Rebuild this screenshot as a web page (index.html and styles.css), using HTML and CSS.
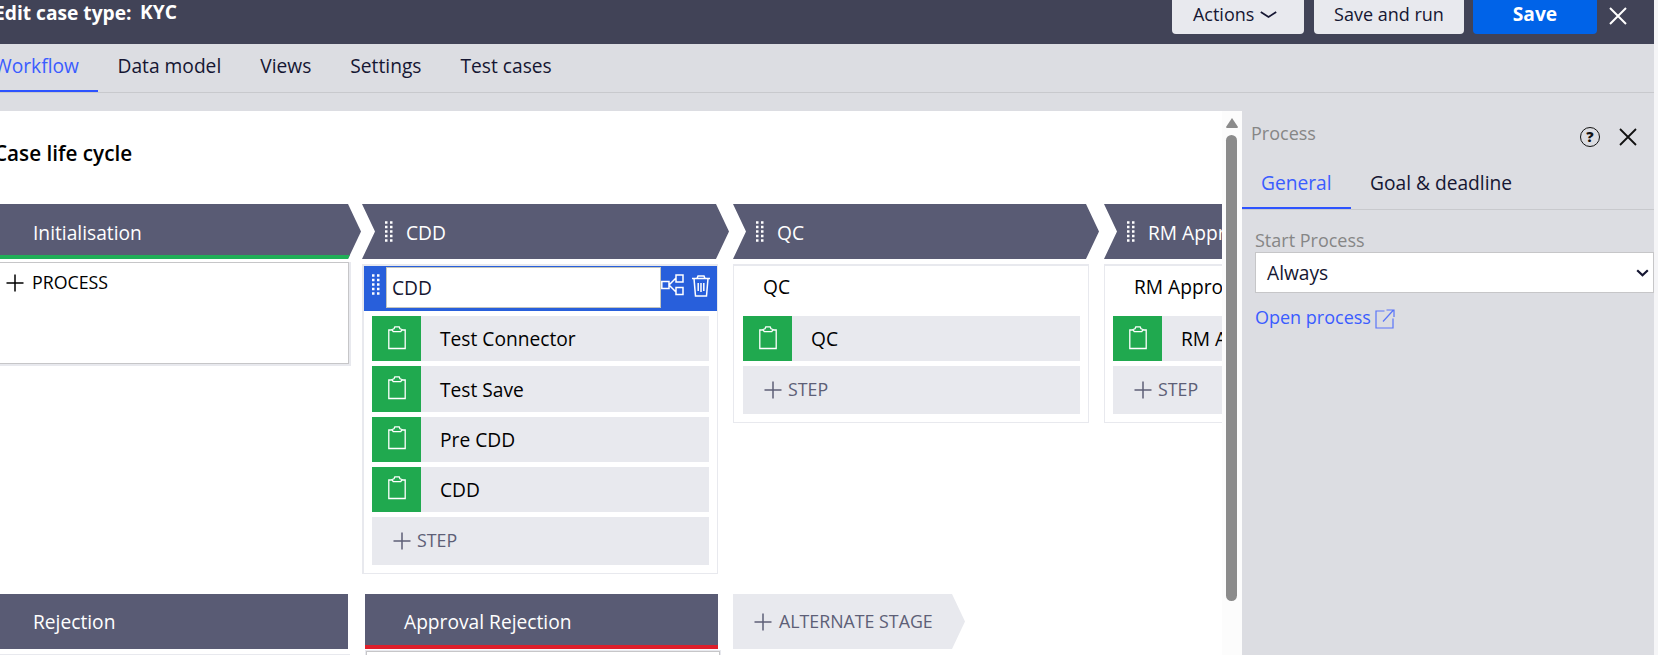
FILE: index.html
```html
<!DOCTYPE html>
<html lang="en">
<head>
    <meta charset="UTF-8">
    <title>Edit case type: KYC</title>
    <link rel="stylesheet" href="styles.css">
</head>
<body>
    <!-- Shared icons -->
    <svg class="icon-defs" width="0" height="0">
        <symbol id="icon-close" viewBox="0 0 18 18"><path d="M1 1 L17 17 M17 1 L1 17"/></symbol>
        <symbol id="icon-plus" viewBox="0 0 18 18"><path d="M9 0.5 V17.5 M0.5 9 H17.5"/></symbol>
        <symbol id="icon-clipboard" viewBox="0 0 18 24"><path d="M4 4 H0.8 V22.5 H17.2 V4 H14 M4 3.5 L6 2.8 L6.8 0.9 H11.2 L12 2.8 L14 3.5 L12.8 5.6 H5.2 Z"/></symbol>
        <symbol id="icon-grip" viewBox="0 0 8 22"><path d="M0 1.5H2.5 M0 6H2.5 M0 10.5H2.5 M0 15H2.5 M0 19.5H2.5 M5 1.5H7.5 M5 6H7.5 M5 10.5H7.5 M5 15H7.5 M5 19.5H7.5"/></symbol>
    </svg>

    <div class="app">
        <header class="topbar">
            <h1>Edit case type:</h1>
            <span class="case-name">KYC</span>
            <div class="topbar-actions">
                <button class="btn btn-actions">Actions
                    <svg class="icon" width="17" height="8" viewBox="0 0 17 8"><path d="M0.8 1 L8.5 6 L16.2 1"/></svg>
                </button>
                <button class="btn btn-run">Save and run</button>
                <button class="btn btn-save">Save</button>
                <svg class="icon close" width="18" height="18"><use href="#icon-close"/></svg>
            </div>
        </header>

        <nav class="tabs">
            <a class="tab active">Workflow</a>
            <a class="tab">Data model</a>
            <a class="tab">Views</a>
            <a class="tab">Settings</a>
            <a class="tab">Test cases</a>
        </nav>

        <div class="workspace">
            <main class="canvas">
                <h2>Case life cycle</h2>

                <div class="stages">
                    <section class="stage stage-first">
                        <div class="stage-head"><span>Initialisation</span></div>
                        <div class="add-process">
                            <svg class="icon" width="18" height="18"><use href="#icon-plus"/></svg>PROCESS
                        </div>
                    </section>

                    <section class="stage stage-selected">
                        <div class="stage-head">
                            <svg class="grip" width="8" height="22"><use href="#icon-grip"/></svg><span>CDD</span>
                        </div>
                        <div class="process">
                            <div class="process-edit">
                                <svg class="grip" width="8" height="22"><use href="#icon-grip"/></svg>
                                <input type="text" value="CDD">
                                <svg class="icon flow" width="23" height="22" viewBox="0 0 23 22"><path d="M0.8 7.5H8V14.5H0.8Z M15 1H22V8H15Z M15 13.5H22V20.5H15Z M15 4 L8 11 L15 18"/></svg>
                                <svg class="icon trash" width="18" height="22" viewBox="0 0 18 22"><path d="M0 3.5H18 M5 3.5 L6 1H12L13 3.5 M2 3.5 L3.5 21H14.5L16 3.5 M6.2 8V16 M9 8V17 M11.8 8V16"/></svg>
                            </div>
                            <div class="step"><i><svg class="icon" width="18" height="24"><use href="#icon-clipboard"/></svg></i><span>Test Connector</span></div>
                            <div class="step"><i><svg class="icon" width="18" height="24"><use href="#icon-clipboard"/></svg></i><span>Test Save</span></div>
                            <div class="step"><i><svg class="icon" width="18" height="24"><use href="#icon-clipboard"/></svg></i><span>Pre CDD</span></div>
                            <div class="step"><i><svg class="icon" width="18" height="24"><use href="#icon-clipboard"/></svg></i><span>CDD</span></div>
                            <div class="add-step"><svg class="icon" width="18" height="18"><use href="#icon-plus"/></svg>STEP</div>
                        </div>
                    </section>

                    <section class="stage">
                        <div class="stage-head">
                            <svg class="grip" width="8" height="22"><use href="#icon-grip"/></svg><span>QC</span>
                        </div>
                        <div class="process">
                            <div class="process-name">QC</div>
                            <div class="step"><i><svg class="icon" width="18" height="24"><use href="#icon-clipboard"/></svg></i><span>QC</span></div>
                            <div class="add-step"><svg class="icon" width="18" height="18"><use href="#icon-plus"/></svg>STEP</div>
                        </div>
                    </section>

                    <section class="stage stage-last">
                        <div class="stage-head">
                            <svg class="grip" width="8" height="22"><use href="#icon-grip"/></svg><span>RM Approval</span>
                        </div>
                        <div class="process">
                            <div class="process-name">RM Approval</div>
                            <div class="step"><i><svg class="icon" width="18" height="24"><use href="#icon-clipboard"/></svg></i><span>RM Approval</span></div>
                            <div class="add-step"><svg class="icon" width="18" height="18"><use href="#icon-plus"/></svg>STEP</div>
                        </div>
                    </section>
                </div>

                <div class="alt-stages">
                    <section class="alt-stage">
                        <div class="alt-head">Rejection</div>
                        <div class="alt-line"></div>
                    </section>
                    <section class="alt-stage alt-approval">
                        <div class="alt-head">Approval Rejection</div>
                        <div class="alt-box"></div>
                    </section>
                    <div class="add-stage"><svg class="icon" width="18" height="18"><use href="#icon-plus"/></svg>ALTERNATE STAGE</div>
                </div>
            </main>

            <div class="scrollbar">
                <div class="scroll-up"></div>
                <div class="scroll-thumb"></div>
            </div>

            <aside class="panel">
                <div class="panel-head">
                    <span>Process</span>
                    <div class="help">?</div>
                    <svg class="icon" width="18" height="18"><use href="#icon-close"/></svg>
                </div>
                <div class="panel-tabs">
                    <a class="active">General</a>
                    <a>Goal &amp; deadline</a>
                </div>
                <div class="panel-body">
                    <label>Start Process</label>
                    <div class="select">Always
                        <svg class="icon" width="13" height="8" viewBox="0 0 13 8"><path d="M1.2 1.2 L6.5 6.2 L11.8 1.2"/></svg>
                    </div>
                    <a class="open-link">Open process
                        <svg class="icon" width="20" height="20" viewBox="0 0 20 20"><path d="M9.5 2H1V19H18V9.5 M8 12.5L18.5 1 M11.5 1H19V8"/></svg>
                    </a>
                </div>
            </aside>
        </div>
    </div>
</body>
</html>
```
FILE: styles.css
```css
/* Base */
* {
    box-sizing: border-box;
}
body {
    margin: 0;
    background: #f5f5f7;
    color: #000;
    font-family: "Open Sans", "Noto Sans", sans-serif;
    font-size: 19.2px;
    line-height: 26px;
    overflow: hidden;
}
h1, h2 {
    margin: 0;
    font-size: 19.2px;
    line-height: 26px;
    white-space: nowrap;
}
.icon-defs {
    display: none;
}
.icon {
    flex: none;
    fill: none;
    stroke: currentColor;
    stroke-width: 1.5;
}
.grip {
    flex: none;
    stroke: #fff;
    stroke-width: 2.5;
}
.app {
    width: 1654px;
    height: 655px;
    display: flex;
    flex-direction: column;
    background: #dcdde2;
    overflow: hidden;
}

/* Top bar */
.topbar {
    height: 44px;
    display: flex;
    align-items: flex-start;
    background: #414357;
    color: #fff;
}
.topbar h1 {
    margin-left: -6px;
    width: 146px;
    line-height: 25px;
}
.case-name {
    font-weight: 700;
    line-height: 23px;
}
.topbar-actions {
    display: flex;
    margin-left: auto;
    padding-right: 27px;
}
.btn {
    height: 34px;
    padding: 0 0 6px;
    border: none;
    border-radius: 0 0 4px 4px;
    background: #e8e9ee;
    color: #151632;
    font: 18px/28px "Open Sans", sans-serif;
}
.btn-actions {
    width: 132px;
    margin-right: 10px;
    padding-right: 6px;
}
.btn-actions .icon {
    margin-left: 1px;
    vertical-align: 2px;
    stroke-width: 1.8;
}
.btn-run {
    width: 150px;
    margin-right: 9px;
}
.btn-save {
    width: 124px;
    margin-right: 12px;
    background: #0063e8;
    color: #fff;
    font-size: 19.2px;
    font-weight: 700;
}
.close {
    margin-top: 7px;
    stroke-width: 2;
}

/* Main tabs */
.tabs {
    height: 49px;
    display: flex;
    gap: 39px;
    border-bottom: 1px solid #c8c9cd;
    color: #151632;
}
.tab {
    height: 48px;
    padding-top: 9px;
    white-space: nowrap;
}
.tab.active {
    width: 98px;
    margin-right: -19.5px;
    text-indent: -6px;
    border-bottom: 2px solid #2d53ff;
    color: #3a5cff;
}

/* Workspace */
.workspace {
    display: flex;
    height: 544px;
    margin-top: 18px;
}
.canvas {
    width: 1222px;
    flex: none;
    overflow: hidden;
    background: #fff;
}
.canvas h2 {
    margin: 29px 0 0 -6px;
    font-size: 20.7px;
    font-weight: 600;
}
.stages {
    height: 390px;
    margin: 38px 0 0 -9px;
    display: grid;
    grid-template-columns: repeat(4, 371px);
    align-items: start;
}
.stage-head {
    width: 366px;
    height: 55px;
    display: flex;
    align-items: center;
    padding: 2px 0 0 23px;
    background: #595b74;
    color: #fff;
    clip-path: polygon(0 0, calc(100% - 13px) 0, 100% 50%, calc(100% - 13px) 100%, 0 100%, 13px 50%);
}
.stage-head .grip {
    margin: 0 13px 2px 0;
}
.stage-first .stage-head {
    width: 370px;
    padding: 6px 0 0 42px;
    border-bottom: 4px solid #20ae57;
    clip-path: polygon(0 0, calc(100% - 13px) 0, 100% 50%, calc(100% - 13px) 100%, 0 100%);
}
.stage-selected .stage-head {
    width: 367px;
}
.add-process {
    width: 358px;
    height: 102px;
    margin-top: 3px;
    padding: 6px 0 0 14px;
    display: flex;
    gap: 8px;
    border: 1px solid #c6c6c8;
    box-shadow: 1px 1px 0 1px #e8e9ee;
    font-size: 17.8px;
}
.add-process .icon {
    margin-top: 5px;
}
.process {
    width: 356px;
    margin-top: 5px;
    padding-bottom: 8px;
    border: 1px solid #e8e9ee;
    border-top-width: 2px;
}
.stage-selected .process {
    border-left-width: 2px;
}
.process-edit {
    height: 45px;
    display: flex;
    align-items: flex-start;
    padding: 1px 0 0 8px;
    background: #285fdb;
    color: #fff;
}
.process-edit .grip {
    margin: 7px 6px 0 0;
}
.process-edit input {
    width: 275px;
    height: 41px;
    margin: 0;
    padding: 0 0 0 5px;
    border: 1px solid #c4c5bd;
    color: #151632;
    font: inherit;
}
.flow {
    margin-top: 7px;
}
.trash {
    margin: 8px 0 0 8px;
}
.process-name {
    height: 45px;
    padding: 8px 0 0 29px;
}
.step, .add-step {
    display: flex;
    width: 337px;
    margin: 5px 0 0 9px;
    background: #e8e9ee;
}
.stage-selected .step, .stage-selected .add-step,
.stage-last .step, .stage-last .add-step {
    margin-left: 8px;
}
.step {
    height: 45.3px;
}
.step i {
    width: 49px;
    padding: 9.5px 0 0 15.5px;
    background: #20a94f;
    color: #fff;
    line-height: 0;
}
.step i .icon {
    stroke-width: 1.3;
}
.step span {
    padding: 10.3px 0 0 19px;
}
.add-step {
    height: 48px;
    padding: 10px 0 0 21px;
    gap: 6px;
    color: #5d5f77;
    font-size: 17.8px;
}
.add-step .icon {
    margin-top: 5px;
}

/* Alternate stages */
.alt-stages {
    display: flex;
}
.alt-stage {
    width: 365px;
}
.alt-head {
    width: 348px;
    height: 55px;
    padding: 15px 0 0 33px;
    background: #595b74;
    color: #fff;
}
.alt-approval {
    width: 368px;
}
.alt-approval .alt-head {
    width: 353px;
    padding-left: 39px;
    border-bottom: 4px solid #de1f2b;
}
.alt-line {
    width: 350px;
    margin-top: 5px;
    border-top: 1px solid #e8e9ee;
}
.alt-box {
    width: 354px;
    height: 20px;
    margin: 2px 0 0 1px;
    border: 1px solid #c6c6c8;
    box-shadow: 0 0 0 1px #e8e9ee;
}
.add-stage {
    display: flex;
    gap: 7px;
    width: 232px;
    height: 55px;
    padding: 14px 0 0 21px;
    background: #e8e9ee;
    color: #5d5f77;
    font-size: 17.8px;
    white-space: nowrap;
    clip-path: polygon(0 0, 219px 0, 100% 50%, 219px 100%, 0 100%);
}
.add-stage .icon {
    margin-top: 5px;
}

/* Scrollbar */
.scrollbar {
    width: 20px;
    flex: none;
    padding: 7px 0 0 4px;
    background: #fcfcfc;
}
.scroll-up {
    width: 12px;
    height: 10px;
    background: #8b8b8b;
    clip-path: polygon(50% 0, 100% 90%, 95% 100%, 5% 100%, 0 90%);
}
.scroll-thumb {
    width: 11px;
    height: 466px;
    margin-top: 7px;
    border-radius: 6px;
    background: #8b8b8b;
}

/* Properties panel */
.panel {
    flex: 1;
    white-space: nowrap;
}
.panel-head {
    display: flex;
    height: 48px;
    padding: 9px 17px 0 9px;
    color: #868686;
    font-size: 18px;
}
.help {
    width: 20px;
    height: 20px;
    margin: 7px 19px 0 auto;
    border: 1.5px solid #111;
    border-radius: 50%;
    color: #111;
    font-size: 14.5px;
    font-weight: 800;
    line-height: 17px;
    text-align: center;
}
.panel-head .icon {
    margin-top: 8px;
    color: #111;
    stroke-width: 1.8;
}
.panel-tabs {
    display: flex;
    height: 51px;
    border-bottom: 1px solid #c8c9cd;
    color: #151632;
}
.panel-tabs a {
    padding: 11px 19px 0;
}
.panel-tabs .active {
    width: 109px;
    padding-right: 0;
    border-bottom: 2px solid #2d53ff;
    color: #3a5cff;
}
.panel-body {
    padding: 17px 0 0 13px;
}
.panel-body label {
    display: block;
    height: 25px;
    color: #868686;
    font-size: 18px;
}
.select {
    display: flex;
    justify-content: space-between;
    height: 41px;
    padding: 7px 4px 0 11px;
    border: 1px solid #c6c6c8;
    background: #fff;
    color: #151632;
}
.select .icon {
    margin-top: 9px;
    stroke-width: 2.2;
}
.open-link {
    display: flex;
    gap: 4px;
    margin-top: 11px;
    color: #3a5cff;
    font-size: 18px;
}
.open-link .icon {
    margin-top: 5px;
    stroke-width: 1.2;
    opacity: 0.8;
}
```
